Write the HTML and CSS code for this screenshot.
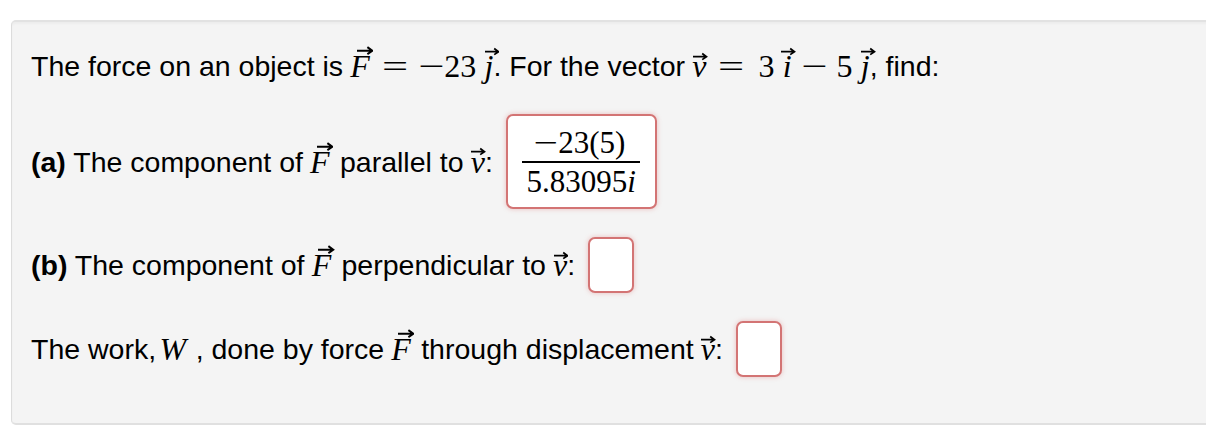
FILE: index.html
```html
<!DOCTYPE html>
<html>
<head>
<meta charset="utf-8">
<link rel="stylesheet" href="styles.css">
</head>
<body>
<div class="panel">
  <div class="row first">
    <span>The force on an object is</span>
    <span class="m"><span class="vec">F<svg viewBox="0 0 12 6"><path d="M0 3.2H10.5M7.5 0.6L11 3.2L7.5 5.6"/></svg></span><span class="op rel">=</span><span class="op neg">−</span>23<span class="vec vj">j<svg viewBox="0 0 12 6"><path d="M0 3.2H10.5M7.5 0.6L11 3.2L7.5 5.6"/></svg></span></span><span class="tight">. For the vector</span>
    <span class="m"><span class="vec vv">v<svg viewBox="0 0 12 6"><path d="M0 3.2H10.5M7.5 0.6L11 3.2L7.5 5.6"/></svg></span><span class="op rel">=</span>3<span class="vec vi">i<svg viewBox="0 0 12 6"><path d="M0 3.2H10.5M7.5 0.6L11 3.2L7.5 5.6"/></svg></span><span class="op bin">−</span>5<span class="vec vj">j<svg viewBox="0 0 12 6"><path d="M0 3.2H10.5M7.5 0.6L11 3.2L7.5 5.6"/></svg></span></span><span class="tight">, find:</span>
  </div>
  <div class="row">
    <span><b>(a)</b> The component of</span>
    <span class="m"><span class="vec vf">F<svg viewBox="0 0 12 6"><path d="M0 3.2H10.5M7.5 0.6L11 3.2L7.5 5.6"/></svg></span></span>
    <span>parallel to</span>
    <span class="m"><span class="vec vv">v<svg viewBox="0 0 12 6"><path d="M0 3.2H10.5M7.5 0.6L11 3.2L7.5 5.6"/></svg></span></span><span class="tight">:</span>
    <span class="ans big"><span class="frac"><span class="num"><span class="minus">−</span>23(5)</span><span class="den">5.83095<i>i</i></span></span></span>
  </div>
  <div class="row">
    <span><b>(b)</b> The component of</span>
    <span class="m"><span class="vec vf">F<svg viewBox="0 0 12 6"><path d="M0 3.2H10.5M7.5 0.6L11 3.2L7.5 5.6"/></svg></span></span>
    <span>perpendicular to</span>
    <span class="m"><span class="vec vv">v<svg viewBox="0 0 12 6"><path d="M0 3.2H10.5M7.5 0.6L11 3.2L7.5 5.6"/></svg></span></span><span class="tight">:</span>
    <span class="ans small"></span>
  </div>
  <div class="row">
    <span>The work,</span>
    <span class="m w"><i>W</i></span><span class="tight">, done by force</span>
    <span class="m"><span class="vec vf">F<svg viewBox="0 0 12 6"><path d="M0 3.2H10.5M7.5 0.6L11 3.2L7.5 5.6"/></svg></span></span>
    <span>through displacement</span>
    <span class="m"><span class="vec vv">v<svg viewBox="0 0 12 6"><path d="M0 3.2H10.5M7.5 0.6L11 3.2L7.5 5.6"/></svg></span></span><span class="tight">:</span>
    <span class="ans small"></span>
  </div>
</div>
</body>
</html>
```

FILE: styles.css
```css
html, body {
  margin: 0;
  padding: 0;
  background: #ffffff;
  overflow: hidden;
}
body {
  font-family: "Liberation Sans", Arial, sans-serif;
  font-size: 28.5px;
  color: #000;
}
.panel {
  margin: 20px 0 0 11px;
  width: 1220px;
  height: 405px;
  box-sizing: border-box;
  background: #f4f4f4;
  border: 1px solid #dcdcdc;
  border-bottom: 2px solid #e0e0e0;
  border-top: 2px solid #e2e2e2;
  border-radius: 5px;
  box-shadow: inset 0 2px 2px rgba(0,0,0,0.03);
  padding: 26px 0 0 19px;
  display: flex;
  flex-direction: column;
  gap: 28px;
}
.row {
  display: flex;
  align-items: center;
  white-space: pre;
  gap: 0.25em;
  line-height: 36px;
}
.row.first { margin-bottom: 2px; }
.row .tight { margin-left: -0.25em; }
.row b { font-weight: bold; }
.m {
  font-family: "Liberation Serif", "Times New Roman", serif;
  font-size: 32px;
  display: inline-flex;
  align-items: baseline;
}
.m i { font-style: italic; }
.m.w { margin-left: -0.12em; }
.m.w i { margin-right: 0.3em; }
.op {
  display: inline-block;
  transform: scaleX(1.45);
}
.op.rel { margin: 0 0.56em 0 0.5em; }
.op.bin { margin: 0 0.42em; }
.op.neg { margin: 0 0.12em 0 0.02em; }
.vec {
  position: relative;
  display: inline-block;
  font-style: italic;
}
.vec.vf { margin-right: 0.1em; }
.vec svg {
  position: absolute;
  left: 0.2em;
  top: -0.06em;
  width: 0.52em;
  height: 0.28em;
  fill: none;
  stroke: #000;
  stroke-width: 1.4;
}
.vec.vv svg { left: 0.02em; top: 0.12em; width: 0.46em; }
.vec.vj { margin-left: 0.26em; }
.vec.vj svg { left: 0.0em; top: -0.02em; width: 0.46em; }
.vec.vi { margin-left: 0.26em; }
.vec.vi svg { left: -0.04em; top: -0.02em; width: 0.46em; }
.ans {
  display: inline-flex;
  align-items: center;
  justify-content: center;
  box-sizing: border-box;
  background: #fff;
  border: 2px solid #d37474;
  border-radius: 7px;
  box-shadow: 0 0 5px rgba(214, 90, 90, 0.35);
  margin-left: 0.2em;
}
.ans.big {
  width: 151px;
  height: 95px;
}
.ans.small {
  width: 46px;
  height: 56px;
}
.frac {
  display: inline-flex;
  flex-direction: column;
  align-items: stretch;
  font-family: "Liberation Serif", "Times New Roman", serif;
  font-size: 31px;
  line-height: 35px;
  text-align: center;
}
.frac .minus {
  display: inline-block;
  transform: scaleX(1.4);
  margin-right: 0.12em;
}
.frac .num {
  border-bottom: 2px solid #000;
  padding: 0 4px 1px;
}
.frac .den { padding: 1px 4px 0; }
.frac i { font-style: italic; }
```
